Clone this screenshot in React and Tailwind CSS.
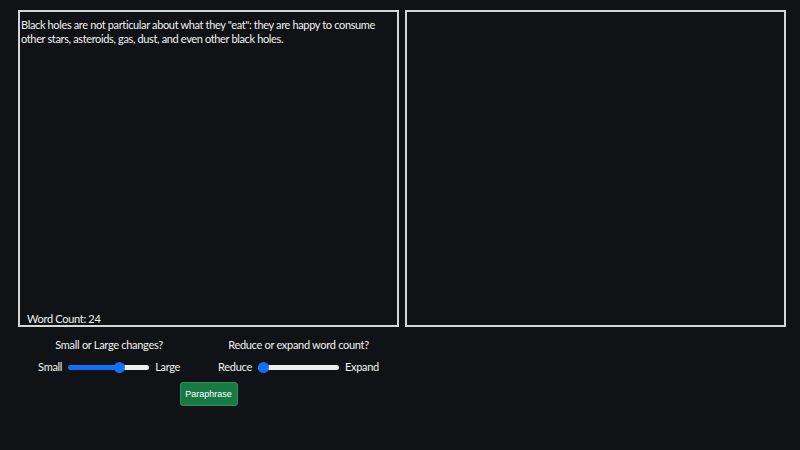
import { useState } from 'react';

const text =
  'Black holes are not particular about what they "eat": they are happy to consume other stars, asteroids, gas, dust, and even other black holes.';

const Slider = ({ left, right, value, onChange }) => (
  <div className="flex items-center gap-[6px]">
    <span>{left}</span>
    <input
      type="range"
      min="0"
      max="100"
      value={value}
      onChange={(e) => onChange(Number(e.target.value))}
      className="w-[81px] h-[11px] appearance-none bg-transparent rounded-full outline-none [&::-webkit-slider-runnable-track]:h-[5px] [&::-webkit-slider-runnable-track]:rounded-full [&::-webkit-slider-thumb]:appearance-none [&::-webkit-slider-thumb]:w-[11px] [&::-webkit-slider-thumb]:h-[11px] [&::-webkit-slider-thumb]:-mt-[3px] [&::-webkit-slider-thumb]:rounded-full [&::-webkit-slider-thumb]:bg-[#1170f5]"
      style={{
        '--fill': `${value}%`,
      }}
    />
    <style>{`input[type=range]::-webkit-slider-runnable-track{background:linear-gradient(to right,#1170f5 0,#1170f5 var(--fill),#efefef var(--fill),#efefef 100%)}`}</style>
    <span>{right}</span>
  </div>
);

const App = () => {
  const [input, setInput] = useState(text);
  const [size, setSize] = useState(65);
  const [length, setLength] = useState(0);
  const words = input.trim() ? input.trim().split(/\s+/).length : 0;

  return (
    <div
      className="w-[800px] h-[450px] bg-[#111216] text-[#f2f2f2] text-[11px] leading-[14px] tracking-[-0.3px] pt-[10px] pl-[18px]"
      style={{ fontFamily: 'Lato, sans-serif' }}
    >
      <div className="flex gap-[6px]">
        <div className="w-[381px] h-[317px] border-2 border-[#d6d6d6] flex flex-col">
          <textarea
            value={input}
            onChange={(e) => setInput(e.target.value)}
            className="flex-1 resize-none bg-transparent outline-none px-px pt-[6px] text-[#f2f2f2] text-[11px] leading-[14px] tracking-[-0.36px]"
          />
          <div className="pl-[7px] pb-px leading-[10px]">Word Count: {words}</div>
        </div>
        <div className="w-[381px] h-[317px] border-2 border-[#d6d6d6]" />
      </div>

      <div className="w-[381px] flex flex-col items-center mt-[11px]">
        <div className="flex gap-[38px]">
          <div className="flex flex-col items-center gap-[8px]">
            <div>Small or Large changes?</div>
            <Slider left="Small" right="Large" value={size} onChange={setSize} />
          </div>
          <div className="flex flex-col items-center gap-[8px]">
            <div>Reduce or expand word count?</div>
            <Slider left="Reduce" right="Expand" value={length} onChange={setLength} />
          </div>
        </div>
        <button
          className="mt-[8px] w-[58px] h-[24px] rounded-[3px] bg-[#177a45] border border-[#2f8f5a] text-[9px] tracking-normal text-white"
          style={{ fontFamily: '"Liberation Sans", sans-serif' }}
        >
          Paraphrase
        </button>
      </div>
    </div>
  );
};

export default App;
